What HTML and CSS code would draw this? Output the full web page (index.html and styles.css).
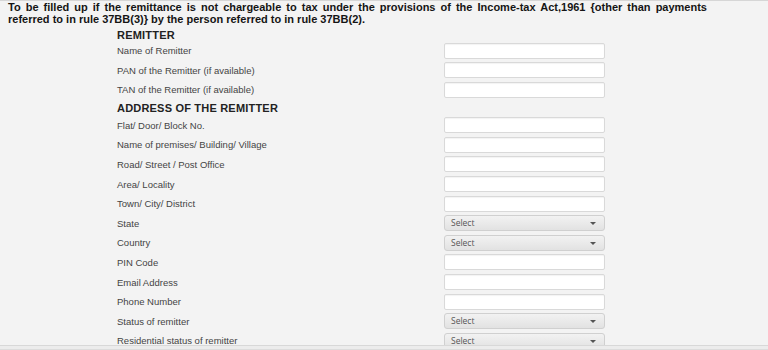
FILE: index.html
```html
<!DOCTYPE html>
<html lang="en">
<head>
    <meta charset="UTF-8">
    <meta name="viewport" content="width=device-width, initial-scale=1.0">
    <title>Form 15CA - Part D</title>
    <link rel="stylesheet" href="styles.css">
</head>
<body>
    <p class="intro">To be filled up if the remittance is not chargeable to tax under the provisions of the Income-tax Act,1961 {other than payments referred to in rule 37BB(3)} by the person referred to in rule 37BB(2).</p>

    <div class="form">
        <h3>REMITTER</h3>
        <div class="row"><label>Name of Remitter</label><input type="text"></div>
        <div class="row"><label>PAN of the Remitter (if available)</label><input type="text"></div>
        <div class="row"><label>TAN of the Remitter (if available)</label><input type="text"></div>

        <h3>ADDRESS OF THE REMITTER</h3>
        <div class="row"><label>Flat/ Door/ Block No.</label><input type="text"></div>
        <div class="row"><label>Name of premises/ Building/ Village</label><input type="text"></div>
        <div class="row"><label>Road/ Street / Post Office</label><input type="text"></div>
        <div class="row"><label>Area/ Locality</label><input type="text"></div>
        <div class="row"><label>Town/ City/ District</label><input type="text"></div>
        <div class="row"><label>State</label><div class="select">Select<span class="caret"></span></div></div>
        <div class="row"><label>Country</label><div class="select">Select<span class="caret"></span></div></div>
        <div class="row"><label>PIN Code</label><input type="text"></div>
        <div class="row"><label>Email Address</label><input type="text"></div>
        <div class="row"><label>Phone Number</label><input type="text"></div>
        <div class="row"><label>Status of remitter</label><div class="select">Select<span class="caret"></span></div></div>
        <div class="row"><label>Residential status of remitter</label><div class="select">Select<span class="caret"></span></div></div>
    </div>

    <div class="bottom-bar"></div>
</body>
</html>
```

FILE: styles.css
```css
body {
    margin: 0;
    background-color: #f3f3f3;
    font-family: 'Liberation Sans', Arial, sans-serif;
    color: #333;
    border-top: 1px solid #d6d6d6;
    overflow: hidden;
    height: 349px;
}
.intro {
    margin: 0;
    padding: 0 0 0 8px;
    width: 699px;
    font-size: 11px;
    line-height: 12px;
    font-weight: bold;
    color: #151515;
    text-align: justify;
}
.form {
    margin-left: 117px;
    width: 488px;
}
.form h3 {
    margin: 3px 0 0.5px;
    font-size: 11px;
    line-height: 14px;
    font-weight: bold;
    letter-spacing: 0.2px;
    color: #222;
}
.row + h3 {
    margin-top: 0.5px;
    margin-bottom: 2px;
}
.row {
    display: grid;
    grid-template-columns: 327px 161px;
    align-items: center;
    height: 16px;
    margin-bottom: 3.6px;
}
.row label {
    font-size: 9.5px;
    color: #444;
}
.row input {
    box-sizing: border-box;
    width: 161px;
    height: 16px;
    margin: 0;
    padding: 0 4px;
    border: 1px solid #d9d9d9;
    border-radius: 2px;
    background: #fff;
    box-shadow: inset 0 1px 1px rgba(0, 0, 0, 0.05);
}
.select {
    position: relative;
    box-sizing: border-box;
    width: 161px;
    height: 16px;
    padding-left: 6px;
    border: 1px solid #d0d0d0;
    border-radius: 3px;
    background: linear-gradient(#f2f2f2, #e2e2e2);
    font-family: 'Open Sans', sans-serif;
    font-size: 8.5px;
    line-height: 14px;
    color: #555;
}
.caret {
    position: absolute;
    right: 8px;
    top: 6px;
    width: 0;
    height: 0;
    border-left: 3px solid transparent;
    border-right: 3px solid transparent;
    border-top: 3px solid #555;
}
.bottom-bar {
    position: fixed;
    left: 0;
    right: 0;
    bottom: 0;
    height: 3px;
    background: #ececec;
    border-top: 1px solid #d8d8d8;
    border-bottom: 1px solid #dcdcdc;
}
```
